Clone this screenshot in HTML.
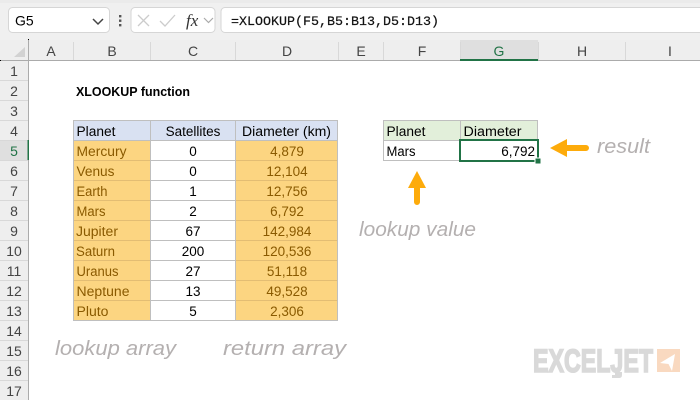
<!DOCTYPE html>
<html><head><meta charset="utf-8"><style>
html,body{margin:0;padding:0;background:#fff}
svg{display:block}
text{font-family:"Liberation Sans",sans-serif;font-size:13.5px;fill:#000}
.h text,.h{fill:#444;text-anchor:middle;font-size:14px}
.b{fill:#8a5a00}
.m{text-anchor:middle}
.w{font-style:italic;font-size:20px;fill:#b4b0b0}
.l{stroke:#d8d8d8;stroke-width:1}
</style></head><body>
<svg width="700" height="400" viewBox="0 0 700 400" xmlns="http://www.w3.org/2000/svg">
<rect width="700" height="400" fill="#fff"/>
<rect width="700" height="40" fill="#f0f0f0"/>
<rect width="700" height="3" fill="#ebebeb"/>
<rect x="8.500" y="7.500" width="101" height="25" rx="4" fill="#fff" stroke="#d6d6d6"/>
<text x="15" y="25.500" style="font-size:14px" fill="#222">G5</text>
<path d="M93 19l5 5 5-5" fill="none" stroke="#444" stroke-width="1.500"/>
<rect x="119" y="15" width="2.400" height="2.400" fill="#555"/><rect x="119" y="19.500" width="2.400" height="2.400" fill="#555"/><rect x="119" y="24" width="2.400" height="2.400" fill="#555"/>
<rect x="131" y="7.500" width="84" height="25" rx="4" fill="#fff" stroke="#d6d6d6"/>
<path d="M138 15l11 11M149 15l-11 11" stroke="#ccc" stroke-width="1.300" fill="none"/>
<path d="M160 21l5 5 10-11" stroke="#ccc" stroke-width="1.300" fill="none"/>
<text x="186" y="26" style="font-family:'Liberation Serif',serif;font-style:italic;font-size:17px;fill:#333">fx</text>
<path d="M204 18l4.500 4.500 4.500-4.500" fill="none" stroke="#aaa" stroke-width="1.200"/>
<rect x="221" y="7.500" width="485" height="25" rx="4" fill="#fff" stroke="#d6d6d6"/>
<text x="231" y="25" style="font-family:'Liberation Mono',monospace;font-size:13.33px;fill:#111;stroke:#111;stroke-width:.2">=XLOOKUP(F5,B5:B13,D5:D13)</text>

<rect y="40" width="700" height="20" fill="#eeeeee"/>
<rect y="60" width="28" height="340" fill="#eeeeee"/>
<path d="M25 47v10H14z" fill="#d2d2d2"/>
<rect x="460" y="40" width="78" height="20" fill="#dfdfdf"/>
<rect y="140" width="28" height="20" fill="#dfdfdf"/>
<path class="l" d="M28.500 40v20M73.500 42v18M150.500 42v18M235.500 42v18M338.500 42v18M383.500 42v18M460.500 42v18M538.500 42v18M625.500 42v18"/>
<path class="l" d="M0 80.500h28M0 100.500h28M0 120.500h28M0 140.500h28M0 160.500h28M0 180.500h28M0 200.500h28M0 220.500h28M0 240.500h28M0 260.500h28M0 280.500h28M0 300.500h28M0 320.500h28M0 340.500h28M0 360.500h28M0 380.500h28"/>
<rect y="60" width="700" height="1" fill="#ababab"/>
<rect x="28" y="40" width="1" height="360" fill="#ababab"/>
<rect x="460" y="59" width="78" height="2" fill="#217346"/>
<rect x="27.500" y="140" width="1.500" height="20" fill="#217346"/>
<rect x="28" y="39" width="1" height="1" fill="#000"/><rect x="0" y="60" width="1" height="1" fill="#000"/>
<g class="h">
<text x="51" y="56">A</text><text x="112" y="56">B</text><text x="193" y="56">C</text><text x="287" y="56">D</text><text x="361" y="56">E</text><text x="422" y="56">F</text><text x="499" y="56" style="fill:#217346">G</text><text x="582" y="56">H</text><text x="670" y="56">I</text>
<text x="14" y="76">1</text><text x="14" y="96">2</text><text x="14" y="116">3</text><text x="14" y="136">4</text><text x="14" y="156" style="fill:#217346">5</text><text x="14" y="176">6</text><text x="14" y="196">7</text><text x="14" y="216">8</text><text x="14" y="236">9</text><text x="14" y="256">10</text><text x="14" y="276">11</text><text x="14" y="296">12</text><text x="14" y="316">13</text><text x="14" y="336">14</text><text x="14" y="356">15</text><text x="14" y="376">16</text><text x="14" y="396">17</text>
</g>

<text x="76" y="96" textLength="114" lengthAdjust="spacingAndGlyphs" style="font-weight:bold;font-size:13px">XLOOKUP function</text>

<rect x="73" y="120" width="265" height="20" fill="#d9e1f2"/>
<rect x="73" y="140" width="77" height="180" fill="#fcd581"/>
<rect x="235" y="140" width="103" height="180" fill="#fcd581"/>
<path d="M73 160.500h77M73 180.500h77M73 200.500h77M73 220.500h77M73 240.500h77M73 260.500h77M73 280.500h77M73 300.500h77M235 160.500h103M235 180.500h103M235 200.500h103M235 220.500h103M235 240.500h103M235 260.500h103M235 280.500h103M235 300.500h103" stroke="#e3bd73"/>
<path d="M150 160.500h85M150 180.500h85M150 200.500h85M150 220.500h85M150 240.500h85M150 260.500h85M150 280.500h85M150 300.500h85M73 140.500h265" stroke="#bfbfbf"/>
<path d="M73.500 120.500h264v200h-264zM150.500 120v200M235.500 120v200" fill="none" stroke="#bfbfbf"/>

<text x="76.500" y="136" textLength="39" lengthAdjust="spacingAndGlyphs">Planet</text>
<text x="193" y="136" class="m">Satellites</text>
<text x="286.500" y="136" class="m" textLength="89" lengthAdjust="spacingAndGlyphs">Diameter (km)</text>

<g class="b">
<text class="b" x="76.500" y="156" textLength="50" lengthAdjust="spacingAndGlyphs">Mercury</text>
<text class="b" x="76.500" y="176" textLength="38" lengthAdjust="spacingAndGlyphs">Venus</text>
<text class="b" x="76.500" y="196" textLength="31" lengthAdjust="spacingAndGlyphs">Earth</text>
<text class="b" x="76.500" y="216" textLength="29" lengthAdjust="spacingAndGlyphs">Mars</text>
<text class="b" x="76" y="236" textLength="42" lengthAdjust="spacingAndGlyphs">Jupiter</text>
<text class="b" x="76" y="256" textLength="39" lengthAdjust="spacingAndGlyphs">Saturn</text>
<text class="b" x="76.500" y="276" textLength="42" lengthAdjust="spacingAndGlyphs">Uranus</text>
<text class="b" x="76.500" y="296" textLength="53" lengthAdjust="spacingAndGlyphs">Neptune</text>
<text class="b" x="76.500" y="316" textLength="32" lengthAdjust="spacingAndGlyphs">Pluto</text>
<text class="b m" x="287" y="156">4,879</text>
<text class="b m" x="287" y="176">12,104</text>
<text class="b m" x="287" y="196">12,756</text>
<text class="b m" x="287" y="216">6,792</text>
<text class="b m" x="287" y="236">142,984</text>
<text class="b m" x="287" y="256">120,536</text>
<text class="b m" x="287" y="276">51,118</text>
<text class="b m" x="287" y="296">49,528</text>
<text class="b m" x="287" y="316">2,306</text>
</g>
<text class="m" x="193" y="156">0</text><text class="m" x="193" y="176">0</text><text class="m" x="193" y="196">1</text><text class="m" x="193" y="216">2</text><text class="m" x="193" y="236">67</text><text class="m" x="193" y="256">200</text><text class="m" x="193" y="276">27</text><text class="m" x="193" y="296">13</text><text class="m" x="193" y="316">5</text>

<rect x="383" y="120" width="155" height="20" fill="#e2efda"/>
<path d="M383.500 120.500h154v40h-154zM383.500 140.500h154M460.500 120v40" fill="none" stroke="#bfbfbf"/>
<text x="386.500" y="136" textLength="39" lengthAdjust="spacingAndGlyphs">Planet</text>
<text x="463.500" y="136" textLength="58" lengthAdjust="spacingAndGlyphs">Diameter</text>
<text x="386.500" y="156" textLength="29" lengthAdjust="spacingAndGlyphs">Mars</text>
<text x="535" y="156" text-anchor="end">6,792</text>
<rect x="460" y="140" width="78" height="21" fill="none" stroke="#217346" stroke-width="2"/>
<rect x="535" y="158" width="6" height="6" fill="#217346" stroke="#fff" stroke-width="1"/>

<path d="M550 148l17-9v6h19a3 3 0 0 1 0 6h-19v6z" fill="#fdab0b"/>
<path d="M417 171l9 17h-6v14a3 3 0 0 1-6 0v-14h-6z" fill="#fdab0b"/>

<text class="w" x="597" y="153" textLength="53" lengthAdjust="spacingAndGlyphs">result</text>
<text class="w" x="359" y="236" textLength="117" lengthAdjust="spacingAndGlyphs">lookup value</text>
<text class="w" x="55" y="355" textLength="121" lengthAdjust="spacingAndGlyphs">lookup array</text>
<text class="w" x="223" y="355" textLength="123" lengthAdjust="spacingAndGlyphs">return array</text>

<text x="533" y="372" textLength="120" lengthAdjust="spacingAndGlyphs" style="font-weight:bold;font-size:32px;fill:#d9d9d9;stroke:#d9d9d9;stroke-width:1.600">EXCELJET</text>
<path d="M615 372h7v3q0 3-3 3h-7v-3h3z" fill="#d9d9d9"/>
<rect x="657" y="349" width="23" height="23" fill="#f9d9c0"/>
<path d="M660 363l15-9-3 17-3.500-7z" fill="#fff"/>
</svg>
</body></html>
